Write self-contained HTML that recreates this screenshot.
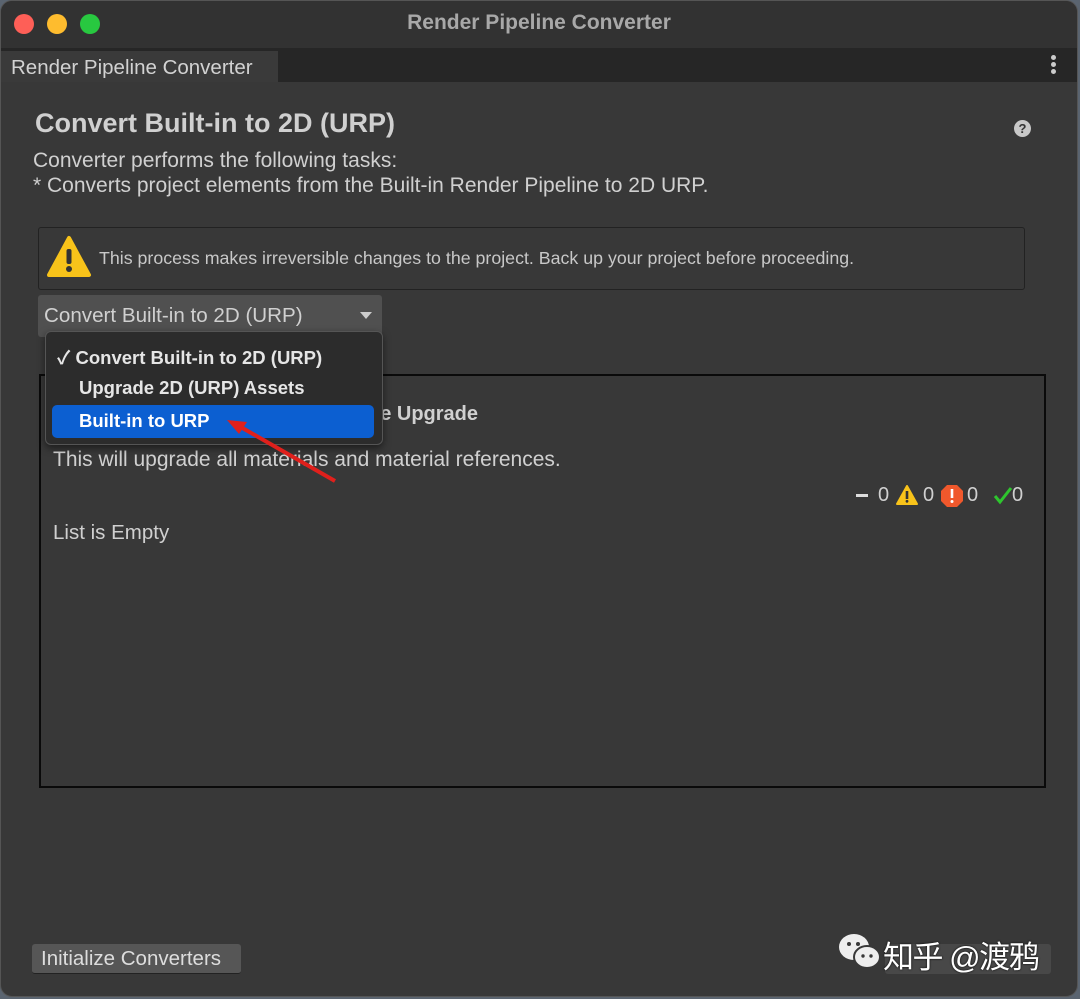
<!DOCTYPE html>
<html><head><meta charset="utf-8"><style>
*{margin:0;padding:0;box-sizing:border-box}
body{width:1080px;height:999px;background:#5a6470;font-family:"Liberation Sans","Noto Sans CJK SC",sans-serif;overflow:hidden;position:relative}
.win{position:absolute;left:0;top:0;width:1078px;height:997px;background:#383838;border-radius:12px;overflow:hidden;border:1px solid #555}
.tb{position:absolute;left:0;top:0;width:100%;height:47px;background:#323232}
.dot{position:absolute;top:13px;width:20px;height:20px;border-radius:50%}
.title{position:absolute;top:10px;left:0;width:100%;text-align:center;color:#a8a8a8;font-weight:bold;font-size:21px}
.tabbar{position:absolute;top:47px;left:0;width:100%;height:34px;background:#262626}
.tab{position:absolute;left:0;top:3px;width:277px;height:31px;background:#3a3a3a;color:#d2d2d2;font-size:20.5px;padding:5px 0 0 10px}
.t{position:absolute;color:#d0d0d0;white-space:nowrap}
</style></head><body>
<div class="win">
<div class="tb">
<div class="dot" style="left:13px;background:#fe5f57"></div>
<div class="dot" style="left:46px;background:#febc2e"></div>
<div class="dot" style="left:79px;background:#28c840"></div>
<div class="title">Render Pipeline Converter</div>
</div>
<div class="tabbar"><div class="tab">Render Pipeline Converter</div>
<div style="position:absolute;left:1050px;top:7px;width:5px">
<div style="width:5px;height:5px;border-radius:50%;background:#ccc;margin-bottom:2px"></div>
<div style="width:5px;height:5px;border-radius:50%;background:#ccc;margin-bottom:2px"></div>
<div style="width:5px;height:5px;border-radius:50%;background:#ccc"></div></div>
</div>
<div class="t" style="left:34px;top:107px;font-size:27px;font-weight:bold">Convert Built-in to 2D (URP)</div>
<div style="position:absolute;left:1013px;top:119px;width:17px;height:17px;border-radius:50%;background:#c8c8c8;color:#333;font-size:13px;font-weight:bold;text-align:center;line-height:17px">?</div>
<div class="t" style="left:32px;top:148px;font-size:21px">Converter performs the following tasks:</div>
<div class="t" style="left:32px;top:173px;font-size:21px">* Converts project elements from the Built-in Render Pipeline to 2D URP.</div>
<div style="position:absolute;left:37px;top:226px;width:987px;height:63px;background:#383838;border:1px solid #222;border-radius:3px"></div>
<svg style="position:absolute;left:45px;top:234px" width="46" height="44" viewBox="0 0 46 44"><path d="M23 3 L43 40 H3 Z" fill="#f8c31a" stroke="#f8c31a" stroke-width="4" stroke-linejoin="round"/><rect x="20.5" y="14" width="5" height="15" rx="2" fill="#333"/><circle cx="23" cy="34" r="3" fill="#333"/></svg>
<div class="t" style="left:98px;top:247px;font-size:17.8px;color:#c8c8c8">This process makes irreversible changes to the project. Back up your project before proceeding.</div>
<div style="position:absolute;left:37px;top:294px;width:344px;height:42px;background:#505050;border-radius:3px"></div>
<div class="t" style="left:43px;top:303px;font-size:20.6px">Convert Built-in to 2D (URP)</div>
<div style="position:absolute;left:359px;top:311px;border-left:6px solid transparent;border-right:6px solid transparent;border-top:7px solid #ccc"></div>
<div style="position:absolute;left:38px;top:373px;width:1007px;height:414px;border:2px solid #0a0a0a"></div>
<div class="t" style="right:599px;top:402px;font-size:20px;font-weight:bold">Built-in to URP Material Type Upgrade</div>
<div class="t" style="left:52px;top:447px;font-size:21px">This will upgrade all materials and material references.</div>
<div class="t" style="left:52px;top:520px;font-size:20.5px">List is Empty</div>
<div style="position:absolute;left:855px;top:493px;width:12px;height:3px;background:#ddd"></div>
<div class="t" style="left:877px;top:483px;font-size:20px">0</div>
<svg style="position:absolute;left:894px;top:483px" width="24" height="22"><path d="M12 2 L22 20 H2 Z" fill="#f8c31a" stroke="#f8c31a" stroke-width="2" stroke-linejoin="round"/><rect x="10.7" y="7" width="2.6" height="8" fill="#333"/><circle cx="12" cy="17.3" r="1.4" fill="#333"/></svg>
<div class="t" style="left:922px;top:483px;font-size:20px">0</div>
<svg style="position:absolute;left:939px;top:483px" width="24" height="24"><polygon points="7,1 17,1 23,7 23,17 17,23 7,23 1,17 1,7" fill="#f0582c"/><rect x="10.7" y="5" width="2.6" height="9" fill="#fff"/><circle cx="12" cy="17.5" r="1.5" fill="#fff"/></svg>
<div class="t" style="left:966px;top:483px;font-size:20px">0</div>
<svg style="position:absolute;left:992px;top:484px" width="20" height="20"><path d="M2 11 L7 17 L18 3" stroke="#2ec52e" stroke-width="3" fill="none"/></svg>
<div class="t" style="left:1011px;top:483px;font-size:20px">0</div>
<div style="position:absolute;left:44px;top:330px;width:338px;height:114px;background:#2c2c2c;border:1px solid #555;border-radius:6px;box-shadow:0 3px 8px rgba(0,0,0,.5)"></div>
<div style="position:absolute;left:51px;top:404px;width:322px;height:33px;background:#0c5fd1;border-radius:5px"></div>
<div class="t" style="left:56px;top:343px;font-size:18.5px;font-weight:bold;color:#e6e6e6">✓ Convert Built-in to 2D (URP)</div>
<div class="t" style="left:78px;top:376px;font-size:18.5px;font-weight:bold;color:#e6e6e6">Upgrade 2D (URP) Assets</div>
<div class="t" style="left:78px;top:409px;font-size:18.5px;font-weight:bold;color:#fff">Built-in to URP</div>
<svg style="position:absolute;left:220px;top:415px" width="120" height="70"><line x1="114" y1="65" x2="18" y2="10" stroke="#e0201c" stroke-width="4"/><polygon points="6,4 26,6 18,18" fill="#e0201c"/></svg>
<div style="position:absolute;left:31px;top:943px;width:209px;height:30px;background:#565656;border-radius:3px;border-bottom:1px solid #222"></div>
<div class="t" style="left:40px;top:946px;font-size:20.5px;color:#ddd">Initialize Converters</div>
<div style="position:absolute;left:884px;top:943px;width:166px;height:30px;background:#484848;border-radius:3px"></div>
<svg style="position:absolute;left:836px;top:930px" width="48" height="42"><ellipse cx="17" cy="16" rx="15" ry="13" fill="#eee"/><ellipse cx="30" cy="26" rx="13" ry="11" fill="#eee" stroke="#383838" stroke-width="2"/><circle cx="12" cy="13" r="2" fill="#383838"/><circle cx="21" cy="13" r="2" fill="#383838"/><circle cx="26" cy="25" r="1.7" fill="#383838"/><circle cx="34" cy="25" r="1.7" fill="#383838"/></svg>
<div class="t" style="left:882px;top:931px;font-size:31px;color:#fff;letter-spacing:-1.5px;text-shadow:0 0 2px #000">知乎 @渡鸦</div>
</div>
</body></html>
